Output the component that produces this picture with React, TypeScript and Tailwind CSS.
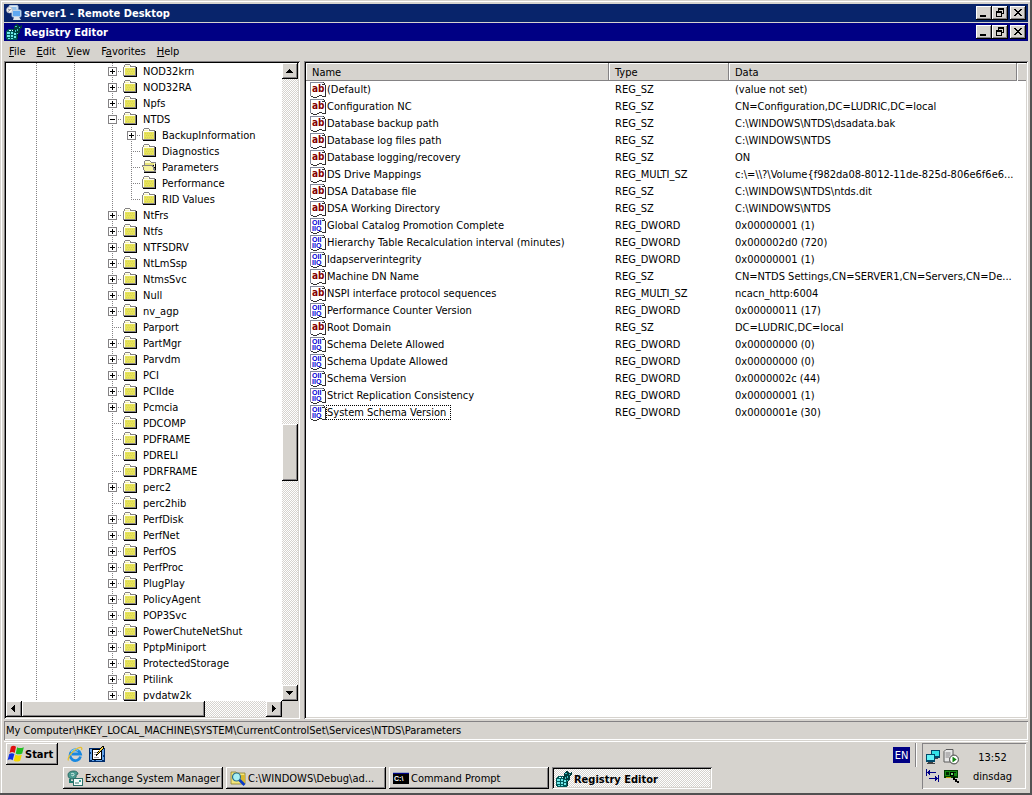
import type { ReactNode } from 'react'
import clsx from 'clsx'

type NodeKind = 'plus' | 'minus' | 'none'

interface TreeItem {
    name: string
    kind: NodeKind
    child?: boolean
    open?: boolean
    last?: boolean
}

interface RegValue {
    name: string
    type: 'REG_SZ' | 'REG_MULTI_SZ' | 'REG_DWORD'
    data: string
}

const RAISED = 'bg-[#d6d3ce] shadow-[inset_-1px_-1px_0_#000,inset_1px_1px_0_#fff,inset_-2px_-2px_0_#848284]'
const SUNKEN = 'shadow-[inset_1px_1px_0_#848284,inset_-1px_-1px_0_#fff,inset_2px_2px_0_#000,inset_-2px_-2px_0_#d6d3ce]'
const THIN_SUNKEN = 'shadow-[inset_1px_1px_0_#848284,inset_-1px_-1px_0_#fff]'
const DITHER = 'bg-[repeating-conic-gradient(#fff_0_25%,#d6d3ce_0_50%)] bg-[length:2px_2px]'

const plus = (name: string): TreeItem => ({ name, kind: 'plus' })
const leaf = (name: string): TreeItem => ({ name, kind: 'none' })

const TREE: TreeItem[] = [
    plus('NOD32krn'),
    plus('NOD32RA'),
    plus('Npfs'),
    { name: 'NTDS', kind: 'minus' },
    { name: 'BackupInformation', kind: 'plus', child: true },
    { name: 'Diagnostics', kind: 'none', child: true },
    { name: 'Parameters', kind: 'none', child: true, open: true },
    { name: 'Performance', kind: 'none', child: true },
    { name: 'RID Values', kind: 'none', child: true, last: true },
    plus('NtFrs'),
    plus('Ntfs'),
    plus('NTFSDRV'),
    plus('NtLmSsp'),
    plus('NtmsSvc'),
    plus('Null'),
    plus('nv_agp'),
    leaf('Parport'),
    plus('PartMgr'),
    plus('Parvdm'),
    plus('PCI'),
    plus('PCIIde'),
    plus('Pcmcia'),
    leaf('PDCOMP'),
    leaf('PDFRAME'),
    leaf('PDRELI'),
    leaf('PDRFRAME'),
    plus('perc2'),
    leaf('perc2hib'),
    plus('PerfDisk'),
    plus('PerfNet'),
    plus('PerfOS'),
    plus('PerfProc'),
    plus('PlugPlay'),
    plus('PolicyAgent'),
    plus('POP3Svc'),
    plus('PowerChuteNetShut'),
    plus('PptpMiniport'),
    plus('ProtectedStorage'),
    plus('Ptilink'),
    plus('pvdatw2k'),
]

const VALUES: RegValue[] = [
    { name: '(Default)', type: 'REG_SZ', data: '(value not set)' },
    { name: 'Configuration NC', type: 'REG_SZ', data: 'CN=Configuration,DC=LUDRIC,DC=local' },
    { name: 'Database backup path', type: 'REG_SZ', data: 'C:\\WINDOWS\\NTDS\\dsadata.bak' },
    { name: 'Database log files path', type: 'REG_SZ', data: 'C:\\WINDOWS\\NTDS' },
    { name: 'Database logging/recovery', type: 'REG_SZ', data: 'ON' },
    { name: 'DS Drive Mappings', type: 'REG_MULTI_SZ', data: 'c:\\=\\\\?\\Volume{f982da08-8012-11de-825d-806e6f6e6...' },
    { name: 'DSA Database file', type: 'REG_SZ', data: 'C:\\WINDOWS\\NTDS\\ntds.dit' },
    { name: 'DSA Working Directory', type: 'REG_SZ', data: 'C:\\WINDOWS\\NTDS' },
    { name: 'Global Catalog Promotion Complete', type: 'REG_DWORD', data: '0x00000001 (1)' },
    { name: 'Hierarchy Table Recalculation interval (minutes)', type: 'REG_DWORD', data: '0x000002d0 (720)' },
    { name: 'ldapserverintegrity', type: 'REG_DWORD', data: '0x00000001 (1)' },
    { name: 'Machine DN Name', type: 'REG_SZ', data: 'CN=NTDS Settings,CN=SERVER1,CN=Servers,CN=De...' },
    { name: 'NSPI interface protocol sequences', type: 'REG_MULTI_SZ', data: 'ncacn_http:6004' },
    { name: 'Performance Counter Version', type: 'REG_DWORD', data: '0x00000011 (17)' },
    { name: 'Root Domain', type: 'REG_SZ', data: 'DC=LUDRIC,DC=local' },
    { name: 'Schema Delete Allowed', type: 'REG_DWORD', data: '0x00000000 (0)' },
    { name: 'Schema Update Allowed', type: 'REG_DWORD', data: '0x00000000 (0)' },
    { name: 'Schema Version', type: 'REG_DWORD', data: '0x0000002c (44)' },
    { name: 'Strict Replication Consistency', type: 'REG_DWORD', data: '0x00000001 (1)' },
    { name: 'System Schema Version', type: 'REG_DWORD', data: '0x0000001e (30)' },
]

/* ---------- icons ---------- */

function Icon({ children, smooth }: { children: ReactNode; smooth?: boolean }) {
    return (
        <svg
            width="16"
            height="16"
            viewBox="0 0 16 16"
            className="shrink-0"
            shapeRendering={smooth ? 'auto' : 'crispEdges'}
            aria-hidden="true"
        >
            {children}
        </svg>
    )
}

function RemoteIcon() {
    return (
        <Icon smooth>
            <rect x="3" y=".5" width="9" height="7" rx="1" fill="#dfe9f4" stroke="#b8cbe0" />
            <rect x="4.500" y="2" width="6" height="4" fill="#8fc0ee" />
            <rect x="6" y="5" width="9" height="7" rx="1" fill="#cfe2f5" stroke="#a5c2e0" />
            <rect x="7" y="6" width="7" height="5" fill="#5fa8f0" />
            <path d="M8 12h5l2 3H7z" fill="#dfe4ea" />
            <circle cx="3.500" cy="5" r="3" fill="#f6f6f2" stroke="#aab" strokeWidth=".6" />
            <path d="M2 4l2 1-2 1.500M5.500 4L4 5" fill="none" stroke="#667" strokeWidth=".7" />
        </Icon>
    )
}

function RegIcon() {
    return (
        <Icon>
            <path d="M0 7l3-2h5l3 2v9H1l-1-1z" fill="#005a5a" />
            <path d="M1 8h3v2H1zM5 8h2v2H5zM8 9h2v2H8zM1 11h3v2H1zM5 11h2v2H5zM8 12h2v2H8zM2 14h2v1H2zM5 14h2v1H5z" fill="#6fe8e8" />
            <path d="M3 6h2v1H3zM6 6h2v1H6z" fill="#d9ffff" />
            <path d="M8 2l2-2h2l1 2 3-1v3l-2 1v3l-2 3-2-2-3-1V5h1z" fill="#003c3c" />
            <path d="M9 2h2v1H9zM13 3h1v1h-1zM9 6h1v2H9zM11 5h1v2h-1zM11 9h1v1h-1z" fill="#3fc6c6" />
            <path d="M11 10h1v5h-1z" fill="#00302f" />
        </Icon>
    )
}

function FolderIcon({ open }: { open?: boolean }) {
    if (open) {
        return (
            <Icon>
                <path d="M3 2h1V1h5v1h1v1h5v11H3z" fill="#848284" />
                <path d="M4 2h5v1h1v1h4v8H4z" fill="#ffffce" />
                <path d="M4 4h9v3H4z" fill="#e7e37b" />
                <path d="M14 5h1v9h-1zM13 8h1v5h-1zM12 6h1v3h-1z" fill="#000" />
                <path d="M1 6h11l3 6v1H3z" fill="#848284" />
                <path d="M2 7h9l2 5H4z" fill="#f7f39c" />
                <path d="M3 13h12v1H3z" fill="#000" />
            </Icon>
        )
    }
    return (
        <Icon>
            <path d="M2 13h12V4h1v10H2z" fill="#000" />
            <path d="M1 4h1V2h1V1h5v1h1v1h5v10H1z" fill="#848284" />
            <path d="M2 4h1V2h5v2h5v8H2z" fill="#fffff0" />
            <path d="M3 5h10v7H3z" fill="#e7e35a" />
            <path d="M3 3h4v1H3z" fill="#f7f3b5" />
            <path d="M4 6h1v1H4zM6 6h1v1H6zM8 6h1v1H8zM10 6h1v1h-1zM5 8h1v1H5zM7 8h1v1H7zM9 8h1v1H9zM11 8h1v1h-1zM4 10h1v1H4zM6 10h1v1H6zM8 10h1v1H8zM10 10h1v1h-1z" fill="#d6d352" />
        </Icon>
    )
}

function ValueIcon({ dword }: { dword: boolean }) {
    return (
        <Icon>
            <path d="M0 0h13v1H1v13H0z" fill="#848a9c" />
            <path d="M1 1h12l2 2v11h-3v-1H9v1H6v1H3v-1H1z" fill="#fff" />
            <path d="M13 0h1v1h-1zM14 1h1v1h-1zM12 2h3v1h-3zM15 3h1v12h-1z" fill="#313031" />
            <path d="M1 14h2v1H1zM3 15h4v1H3zM7 14h2v1H7zM9 13h3v1H9zM12 14h3v1h-3z" fill="#313031" />
            {dword ? (
                <g fill="#0000d6" fontFamily="Liberation Sans, sans-serif" fontSize="7" fontWeight="700">
                    <text x="2" y="7">OII</text>
                    <text x="2" y="13">IIO</text>
                </g>
            ) : (
                <text x="2" y="10" fill="#840000" fontFamily="DejaVu Sans Condensed, sans-serif" fontSize="10" fontWeight="700">ab</text>
            )}
        </Icon>
    )
}

function WindowsFlag() {
    return (
        <svg width="18" height="18" viewBox="0 0 16 16" className="shrink-0" aria-hidden="true">
            <path d="M3.500 1.500c1.500-1 3-1 4.500 0L6.800 7C5.300 6 3.800 6 2.300 7z" fill="#e01010" />
            <path d="M9 2c1.500 1 3.500 1 6 0l-1.500 5.500c-2 1-4 1-5.700 0z" fill="#20c020" />
            <path d="M2 8c1.500-1 3-1 4.500 0L5 13.500c-1.500-1-3-1-4.500 0z" fill="#1030e0" />
            <path d="M7.500 8.500c1.500 1 3.500 1 5.700.2L11.700 14c-2 1-4 1-5.700 0z" fill="#f4d800" />
        </svg>
    )
}

function IeIcon() {
    return (
        <Icon smooth>
            <path d="M13.500 10.500A5.300 5.300 0 1 1 13.500 8H5" fill="none" stroke="#1888e0" strokeWidth="2.800" />
            <path d="M4 6A4.700 4.700 0 0 1 11 4.500" fill="none" stroke="#7cd4ff" strokeWidth="1.200" />
            <path d="M1.500 14.500C0 12 5 5 11 2c3-1.500 4.500-.5 3.500 2" fill="none" stroke="#e8c030" strokeWidth="1.300" />
        </Icon>
    )
}

function DesktopIcon() {
    return (
        <Icon>
            <path d="M0 2h16v14H0z" fill="#002c6b" />
            <path d="M1 3h2v11H1zM13 3h2v11h-2zM3 14h10v1H3z" fill="#63a2e7" />
            <path d="M1 6h1v2H1zM14 9h1v2h-1zM5 14h2v1H5z" fill="#003c84" />
            <path d="M3 3h10v11H3z" fill="#000" />
            <path d="M4 4h8v9H4z" fill="#fff" />
            <path d="M5 6h3v1H5zM5 8h2v1H5zM5 11h5v1H5z" fill="#a5a2a5" />
            <path d="M13 0h2v2l-6 7-2 1 1-3z" fill="#000" />
            <path d="M13 1h1v1l-5 6H8z" fill="#f7d64a" />
        </Icon>
    )
}

function ExchangeIcon() {
    return (
        <Icon smooth>
            <path d="M1 5c0-3 3-4 6-4 2 0 4 1 4 3L9 5c1 2-1 4-3 4C3 9 1 8 1 5z" fill="#4a9a90" stroke="#1d5a55" strokeWidth=".8" />
            <path d="M4 4c1-1 3-1 3 .5S5 6 4.500 5.500" fill="none" stroke="#d9f0ec" />
            <path d="M3 9v3h3" fill="none" stroke="#1d7a70" strokeWidth="2" />
            <rect x="6.500" y="8.500" width="9" height="7" fill="#f4fbfa" stroke="#2b6f68" />
            <path d="M12 10h2v2h-2z" fill="#3aa79a" />
            <path d="M8 13h4" stroke="#3b7a75" />
        </Icon>
    )
}

function SearchFolderIcon() {
    return (
        <Icon smooth>
            <path d="M1 2h5l1 1h8v11H1z" fill="#f4e67a" stroke="#8c7d2e" strokeWidth=".8" />
            <path d="M11 5h4v9h-4z" fill="#d8b830" />
            <circle cx="6.500" cy="7" r="4" fill="#a8f0f4" stroke="#2a6f8c" strokeWidth="1.200" />
            <path d="M9.500 10L14.500 15" stroke="#0838c8" strokeWidth="2.600" />
        </Icon>
    )
}

function CmdIcon() {
    return (
        <Icon>
            <path d="M0 2h16v12H0z" fill="#000" />
            <path d="M0 2h16v1H0z" fill="#9caac6" />
            <path d="M0 3h16v1H0z" fill="#000084" />
            <text x="1" y="11" fill="#fff" fontFamily="Liberation Sans, sans-serif" fontSize="7" fontWeight="700">C:\</text>
        </Icon>
    )
}

function NetworkTrayIcon() {
    return (
        <Icon>
            <path d="M6 1h9v8H6z" fill="#004a6b" />
            <path d="M7 2h7v5H7z" fill="#31e3e7" />
            <path d="M9 9h4v1H9z" fill="#424142" />
            <path d="M1 5h9v8H1z" fill="#004a6b" />
            <path d="M2 6h7v5H2z" fill="#63f3f7" />
            <path d="M3 13h5v1H3zM2 14h8v1H2z" fill="#424142" />
        </Icon>
    )
}

function ServerTrayIcon() {
    return (
        <Icon smooth>
            <path d="M1 2.500l2-2h7V13H1z" fill="#e7e7e7" stroke="#5a5a5a" />
            <path d="M2.500 4h5M2.500 6h5M2.500 8h4" stroke="#848284" />
            <circle cx="11" cy="10.500" r="4.400" fill="#fff" stroke="#2b2b2b" strokeWidth=".9" />
            <path d="M9.500 7.500v6l4.200-3z" fill="#108410" />
        </Icon>
    )
}

function ArrowsTrayIcon() {
    return (
        <Icon>
            <path d="M1 1h1v7H1zM2 4h9v1H2zM3 3h1v3H3zM4 2h1v5H4z" fill="#000084" />
            <path d="M13 7h1v7h-1zM4 10h9v1H4zM11 9h1v3h-1zM10 8h1v5h-1z" fill="#000084" />
        </Icon>
    )
}

function CardTrayIcon() {
    return (
        <Icon>
            <path d="M1 2h14v8H1z" fill="#003c00" />
            <path d="M2 3h12v5H2z" fill="#188a18" />
            <path d="M3 4h3v3H3zM11 4h2v1h-2z" fill="#002800" />
            <circle cx="9" cy="6" r="2" fill="#6bdf6b" stroke="#000" />
            <path d="M10 9h2v2h2v2h2v2h-2v-1h-2v-2h-2z" fill="#000" />
            <path d="M3 9h5v1H3z" fill="#bda500" />
        </Icon>
    )
}

/* ---------- title bars ---------- */

function CaptionButton({ label, children }: { label: string; children: ReactNode }) {
    return (
        <button aria-label={label} className={clsx(RAISED, 'flex h-[14px] w-4 items-center justify-center')}>
            <svg width="10" height="10" viewBox="0 0 10 10" shapeRendering="crispEdges" aria-hidden="true">
                {children}
            </svg>
        </button>
    )
}

function TitleBar({ icon, title, className }: { icon: ReactNode; title: string; className: string }) {
    return (
        <div className={clsx('flex h-[18px] shrink-0 items-center gap-0.5 px-0.5 text-white', className)}>
            {icon}
            <h1 className="flex-1 truncate font-bold">{title}</h1>
            <div className="flex">
                <CaptionButton label="Minimize">
                    <path d="M1 7h6v2H1z" />
                </CaptionButton>
                <CaptionButton label="Restore">
                    <path d="M3 0h6v6H7V5h1V2H4v1H3zM1 3h6v6H1zM2 5v3h4V5z" fillRule="evenodd" />
                </CaptionButton>
            </div>
            <CaptionButton label="Close">
                <path d="M1 1h2v1h1v1h2V2h1V1h2v1H8v1H7v1H6v1h1v1h1v1h1v1H7V7H6V6H4v1H3v1H1V7h1V6h1V5h1V4H3V3H2V2H1z" />
            </CaptionButton>
        </div>
    )
}

/* ---------- tree ---------- */

function Guide({ line }: { line?: boolean }) {
    return (
        <svg width="19" height="16" className="shrink-0" shapeRendering="crispEdges" aria-hidden="true">
            {line && <path d="M9.500 0v16" stroke="#848284" strokeDasharray="1 1" />}
        </svg>
    )
}

function Branch({ kind, last }: { kind: NodeKind; last?: boolean }) {
    return (
        <svg width="19" height="16" className="shrink-0" shapeRendering="crispEdges" aria-hidden="true">
            <path d={last ? 'M9.500 0v9' : 'M9.500 0v16'} stroke="#848284" strokeDasharray="1 1" />
            <path d="M9 8.500h10" stroke="#848284" strokeDasharray="1 1" />
            {kind !== 'none' && (
                <>
                    <rect x="5.500" y="4.500" width="8" height="8" fill="#fff" stroke="#848284" />
                    <path d="M7 8.500h5" stroke="#000" />
                </>
            )}
            {kind === 'plus' && <path d="M9.500 6v5" stroke="#000" />}
        </svg>
    )
}

function TreeRow({ item }: { item: TreeItem }) {
    return (
        <li role="treeitem" aria-selected={!!item.open} className="flex h-4 items-center">
            <Guide line />
            <Guide />
            <Guide line />
            <Guide />
            {item.child && <Guide line />}
            <Branch kind={item.kind} last={item.last} />
            <FolderIcon open={item.open} />
            <span className="pl-[5px] whitespace-nowrap">{item.name}</span>
        </li>
    )
}

function ScrollButton({ label, d }: { label: string; d: string }) {
    return (
        <button aria-label={label} className={clsx(RAISED, 'flex size-4 shrink-0 items-center justify-center')}>
            <svg width="8" height="8" viewBox="0 0 8 8" shapeRendering="crispEdges" aria-hidden="true">
                <path d={d} />
            </svg>
        </button>
    )
}

function TreePane() {
    return (
        <div className={clsx(SUNKEN, 'flex w-[296px] shrink-0 bg-white p-0.5')}>
            <div className="flex min-w-0 flex-1 flex-col">
                <ul role="tree" className="min-h-0 flex-1 overflow-hidden pl-[21px]">
                    {TREE.map((item) => (
                        <TreeRow key={item.name} item={item} />
                    ))}
                </ul>
                <div className={clsx(DITHER, 'flex h-4 shrink-0')}>
                    <ScrollButton label="Scroll left" d="M5 0v7H4V6H3V5H2V4H1V3h1V2h1V1h1V0z" />
                    <div className={clsx(RAISED, 'flex-[183]')} />
                    <div className="flex-[61]" />
                    <ScrollButton label="Scroll right" d="M2 0v7h1V6h1V5h1V4h1V3H5V2H4V1H3V0z" />
                </div>
            </div>
            <div className="flex w-4 shrink-0 flex-col bg-[#d6d3ce] pb-4">
                <div className={clsx(DITHER, 'flex flex-1 flex-col')}>
                    <ScrollButton label="Scroll up" d="M3 2h1v1h1v1h1v1h1v1H0V5h1V4h1V3h1z" />
                    <div className="flex-[346]" />
                    <div className={clsx(RAISED, 'flex-[57]')} />
                    <div className="flex-[204]" />
                    <ScrollButton label="Scroll down" d="M0 2h7v1H6v1H5v1H4v1H3V5H2V4H1V3H0z" />
                </div>
            </div>
        </div>
    )
}

/* ---------- values ---------- */

function ValuePane() {
    const th = 'h-[18px] bg-[#d6d3ce] pl-1.5 text-left font-normal shadow-[inset_-1px_-1px_0_#848284,inset_1px_1px_0_#fff]'

    return (
        <div className={clsx(SUNKEN, 'min-w-0 flex-1 overflow-hidden bg-white p-0.5')}>
            <table className="w-full table-fixed border-collapse">
                <colgroup>
                    <col className="w-[303px]" />
                    <col className="w-[120px]" />
                    <col />
                    <col className="w-[9px]" />
                </colgroup>
                <thead>
                    <tr>
                        <th className={th}>Name</th>
                        <th className={th}>Type</th>
                        <th className={th}>Data</th>
                        <td className="bg-[#d6d3ce] shadow-[inset_1px_1px_0_#fff,inset_0_-1px_0_#848284]" />
                    </tr>
                </thead>
                <tbody>
                    {VALUES.map((v, i) => (
                        <tr key={v.name} className="h-[17px]">
                            <td className="p-0 pl-1">
                                <div className="flex h-[17px] items-center">
                                    <ValueIcon dword={v.type === 'REG_DWORD'} />
                                    <span
                                        className={clsx(
                                            'border border-dotted whitespace-nowrap',
                                            i === VALUES.length - 1 ? 'border-black pr-1' : 'border-transparent'
                                        )}
                                    >
                                        {v.name}
                                    </span>
                                </div>
                            </td>
                            <td className="p-0 pl-1.5">{v.type}</td>
                            <td className="p-0 pl-1.5 whitespace-nowrap">{v.data}</td>
                            <td className="p-0" />
                        </tr>
                    ))}
                </tbody>
            </table>
        </div>
    )
}

/* ---------- taskbar ---------- */

function TaskButton({ icon, label, active }: { icon: ReactNode; label: string; active?: boolean }) {
    return (
        <button
            className={clsx(
                'flex h-[22px] w-40 items-center gap-0.5 pl-1 whitespace-nowrap',
                active ? [DITHER, SUNKEN, 'pt-0.5 font-bold'] : RAISED
            )}
        >
            {icon}
            <span>{label}</span>
        </button>
    )
}

function Taskbar() {
    return (
        <div className="mt-px flex h-[50px] shrink-0 items-start border-t border-white px-0.5 pt-px">
            <button className={clsx(RAISED, 'flex h-[22px] w-[52px] shrink-0 items-center pl-px font-bold')}>
                <WindowsFlag />
                Start
            </button>
            <div className="ml-[5px] flex flex-1 flex-col gap-0.5">
                <div className="flex h-[22px] items-center gap-1.5 pl-1">
                    <button aria-label="Internet Explorer">
                        <IeIcon />
                    </button>
                    <button aria-label="Show Desktop">
                        <DesktopIcon />
                    </button>
                </div>
                <div className="flex gap-[3px]">
                    <TaskButton icon={<ExchangeIcon />} label="Exchange System Manager" />
                    <TaskButton icon={<SearchFolderIcon />} label="C:\WINDOWS\Debug\ad..." />
                    <TaskButton icon={<CmdIcon />} label="Command Prompt" />
                    <TaskButton icon={<RegIcon />} label="Registry Editor" active />
                </div>
            </div>
            <button className="mt-1 h-4 w-[17px] bg-[#000084] text-center text-white">EN</button>
            <div className="mx-[5px] h-6 w-0.5 border-r border-l border-r-white border-l-[#848284]" />
            <div className={clsx(THIN_SUNKEN, 'flex h-[46px] w-[104px] items-center pl-[3px]')}>
                <div className="grid grid-cols-2 gap-x-0.5 gap-y-[3px]">
                    <NetworkTrayIcon />
                    <ServerTrayIcon />
                    <ArrowsTrayIcon />
                    <CardTrayIcon />
                </div>
                <div className="flex flex-1 flex-col gap-1.5 pt-px text-center">
                    <time>13:52</time>
                    <span>dinsdag</span>
                </div>
            </div>
        </div>
    )
}

export default function App() {
    return (
        <div className="flex h-screen flex-col overflow-hidden bg-[#d6d3ce] p-1 font-['DejaVu_Sans_Condensed',sans-serif] text-[11px] leading-[13px] text-black shadow-[inset_-2px_-2px_0_#525152,inset_1px_1px_0_#d6d3ce,inset_2px_2px_0_#fff]">
            <TitleBar icon={<RemoteIcon />} title="server1 - Remote Desktop" className="bg-[#08246b]" />
            <TitleBar icon={<RegIcon />} title="Registry Editor" className="mt-px bg-[#000084]" />

            <nav className="flex h-5 shrink-0 items-center gap-[11px] pl-[5px]">
                <button><u>F</u>ile</button>
                <button><u>E</u>dit</button>
                <button><u>V</u>iew</button>
                <button>F<u>a</u>vorites</button>
                <button><u>H</u>elp</button>
            </nav>

            <main className="flex min-h-0 flex-1 gap-1">
                <TreePane />
                <ValuePane />
            </main>

            <p className={clsx(THIN_SUNKEN, 'mt-0.5 h-[19px] shrink-0 truncate px-0.5 py-[3px]')}>
                My Computer\HKEY_LOCAL_MACHINE\SYSTEM\CurrentControlSet\Services\NTDS\Parameters
            </p>

            <Taskbar />
        </div>
    )
}
